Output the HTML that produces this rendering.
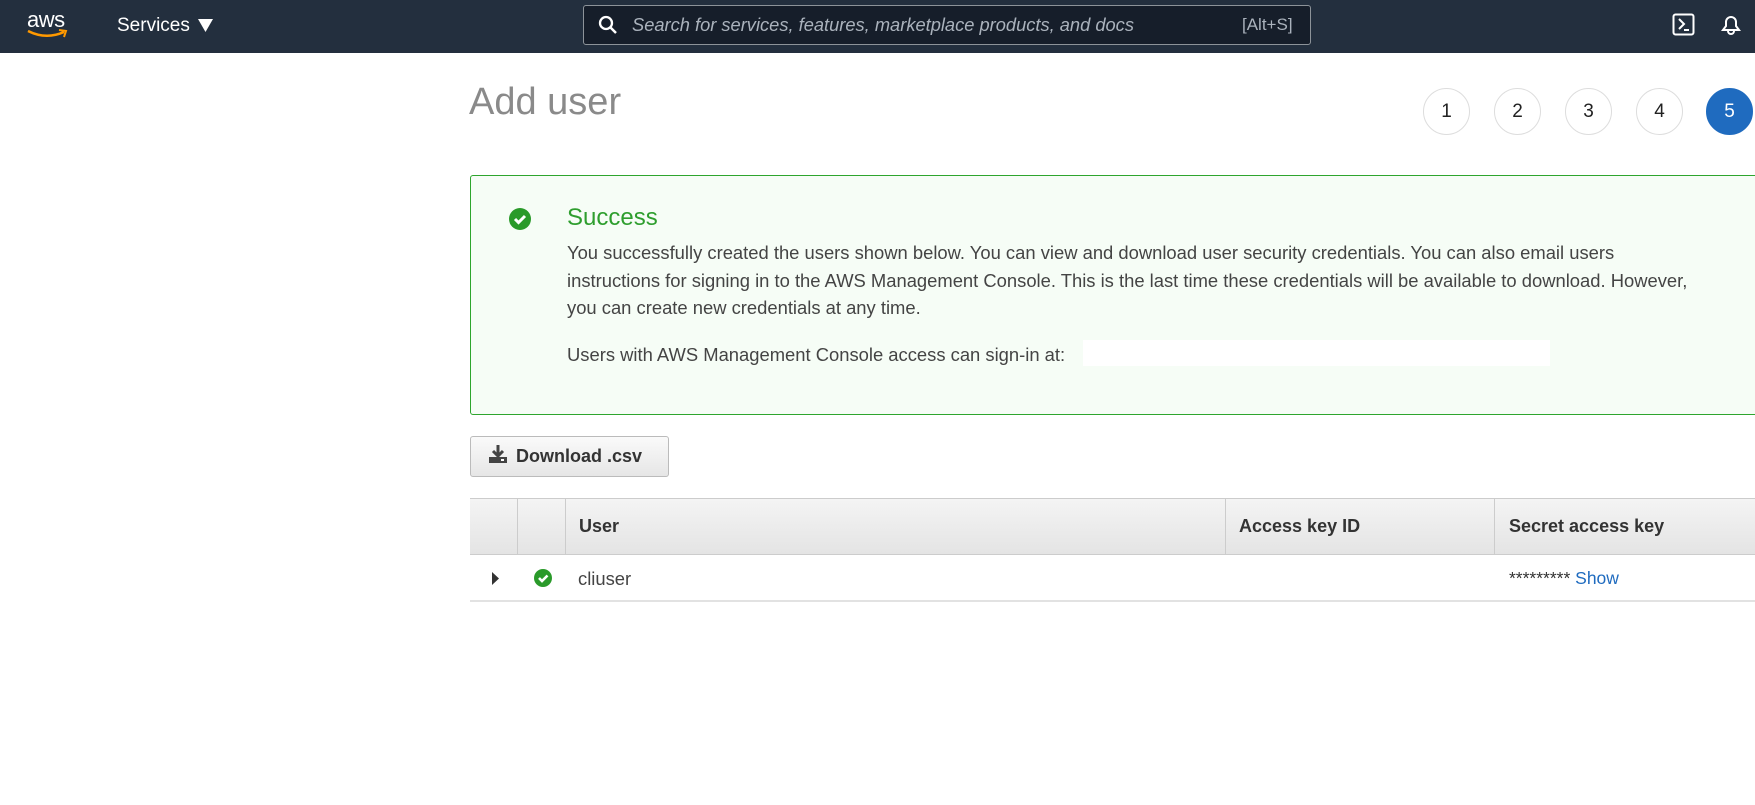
<!DOCTYPE html>
<html><head><meta charset="utf-8"><style>
*{box-sizing:border-box;margin:0;padding:0}
body{width:1755px;height:805px;overflow:hidden;background:#fff;font-family:"Liberation Sans",Arial,sans-serif;position:relative;color:#444}
.nav{position:absolute;left:0;top:0;width:1755px;height:53px;background:#232f3e}
.abs{position:absolute}
.circ{position:absolute;top:88px;width:47px;height:47px;border-radius:50%;border:1px solid #ddd;text-align:center;line-height:45px;font-size:19px;color:#222;background:#fff}
.box{position:absolute;left:470px;top:175px;width:1300px;height:240px;border:1px solid #2ea52e;border-radius:3px;background:#f6fdf6}
.p{position:absolute;left:96px;font-size:18.4px;color:#444;white-space:nowrap}
</style></head><body>
<div class="nav">
 <div class="abs" style="left:27px;top:7px;color:#fff;font-size:22px;letter-spacing:-0.5px">aws</div>
 <svg class="abs" style="left:26px;top:28px" width="46" height="12"><path d="M2 3 Q20 12 38 4" stroke="#f90" stroke-width="2.5" fill="none"/><path d="M33 2 L40 3 L38 9" stroke="#f90" stroke-width="2" fill="none"/></svg>
 <div class="abs" style="left:117px;top:15px;color:#fff;font-size:19px">Services</div>
 <svg class="abs" style="left:198px;top:19px" width="15" height="13"><path d="M0 0 H15 L7.5 13Z" fill="#fff"/></svg>
 <div class="abs" style="left:583px;top:5px;width:728px;height:40px;border:1px solid #8d9399;border-radius:3px;background:#161e2a"></div>
 <svg class="abs" style="left:598px;top:15px" width="20" height="20"><circle cx="8" cy="8" r="6" stroke="#fff" stroke-width="2.3" fill="none"/><path d="M12.5 12.5 L18 18" stroke="#fff" stroke-width="2.5"/></svg>
 <div class="abs" style="left:632px;top:14px;color:#aab2bc;font-size:18.3px;font-style:italic">Search for services, features, marketplace products, and docs</div>
 <div class="abs" style="left:1242px;top:15px;color:#aab2bc;font-size:17px">[Alt+S]</div>
 <svg class="abs" style="left:1672px;top:13px" width="24" height="24"><rect x="1.5" y="1.5" width="20" height="20" rx="2" stroke="#fff" stroke-width="2" fill="none"/><path d="M7 6 L12 11 L7 16 M12 17 H17" stroke="#fff" stroke-width="2" fill="none"/></svg>
 <svg class="abs" style="left:1719px;top:13px" width="24" height="24"><path d="M4 17 H20 L17 13 V9 A5 5 0 0 0 7 9 V13 Z" stroke="#fff" stroke-width="2" fill="none"/><path d="M9 18 A3 3 0 0 0 15 18" stroke="#fff" stroke-width="2" fill="none"/></svg>
</div>
<div class="abs" style="left:469px;top:81px;font-size:38px;color:#8a8a8a">Add user</div>
<div class="circ" style="left:1423px">1</div>
<div class="circ" style="left:1494px">2</div>
<div class="circ" style="left:1565px">3</div>
<div class="circ" style="left:1636px">4</div>
<div class="circ" style="left:1706px;background:#1f6bbf;border-color:#1f6bbf;color:#fff">5</div>
<div class="box">
 <svg class="abs" style="left:38px;top:32px" width="22" height="22"><circle cx="11" cy="11" r="11" fill="#2a9a2a"/><path d="M6 11 L9.5 14.5 L16 8" stroke="#fff" stroke-width="3" fill="none"/></svg>
 <div class="p" style="top:28px;font-size:24px;color:#2e9e2e">Success</div>
 <div class="p" style="top:63px;line-height:27.7px">You successfully created the users shown below. You can view and download user security credentials. You can also email users<br>instructions for signing in to the AWS Management Console. This is the last time these credentials will be available to download. However,<br>you can create new credentials at any time.</div>
 <div class="p" style="top:168px">Users with AWS Management Console access can sign-in at:</div>
 <div class="abs" style="left:612px;top:164px;width:467px;height:26px;background:#fff"></div>
</div>
<div class="abs" style="left:470px;top:436px;width:199px;height:41px;border:1px solid #bbb;border-radius:3px;background:linear-gradient(#fafafa,#e6e6e6)"></div>
<svg class="abs" style="left:488px;top:444px" width="20" height="20"><path d="M10 1 V11 M5 7 L10 12 L15 7" stroke="#444" stroke-width="3" fill="none"/><rect x="1" y="13" width="18" height="6" fill="#444"/><rect x="13" y="15" width="3" height="2" fill="#fff"/></svg>
<div class="abs" style="left:516px;top:446px;font-size:18px;font-weight:bold;color:#333">Download .csv</div>
<div class="abs" style="left:470px;top:498px;width:1285px;height:57px;background:linear-gradient(#f4f4f4,#e4e4e4);border-top:1px solid #ccc;border-bottom:1px solid #ccc"></div>
<div class="abs" style="left:517px;top:498px;width:1px;height:57px;background:#ccc"></div>
<div class="abs" style="left:565px;top:498px;width:1px;height:57px;background:#ccc"></div>
<div class="abs" style="left:1225px;top:498px;width:1px;height:57px;background:#ccc"></div>
<div class="abs" style="left:1494px;top:498px;width:1px;height:57px;background:#ccc"></div>
<div class="abs" style="left:579px;top:516px;font-size:18px;font-weight:bold;color:#333">User</div>
<div class="abs" style="left:1239px;top:516px;font-size:18px;font-weight:bold;color:#333">Access key ID</div>
<div class="abs" style="left:1509px;top:516px;font-size:18px;font-weight:bold;color:#333">Secret access key</div>
<svg class="abs" style="left:492px;top:572px" width="8" height="13"><path d="M0 0 L7 6.5 L0 13Z" fill="#333"/></svg>
<svg class="abs" style="left:534px;top:569px" width="18" height="18"><circle cx="9" cy="9" r="9" fill="#2a9a2a"/><path d="M5 9 L8 12 L13.5 6.5" stroke="#fff" stroke-width="2.6" fill="none"/></svg>
<div class="abs" style="left:578px;top:568px;font-size:18.4px;color:#444">cliuser</div>
<div class="abs" style="left:1509px;top:568px;font-size:17.5px;color:#333">********* <span style="color:#1f6bbf">Show</span></div>
<div class="abs" style="left:470px;top:600px;width:1285px;height:2px;background:#e2e2e2"></div>
</body></html>
